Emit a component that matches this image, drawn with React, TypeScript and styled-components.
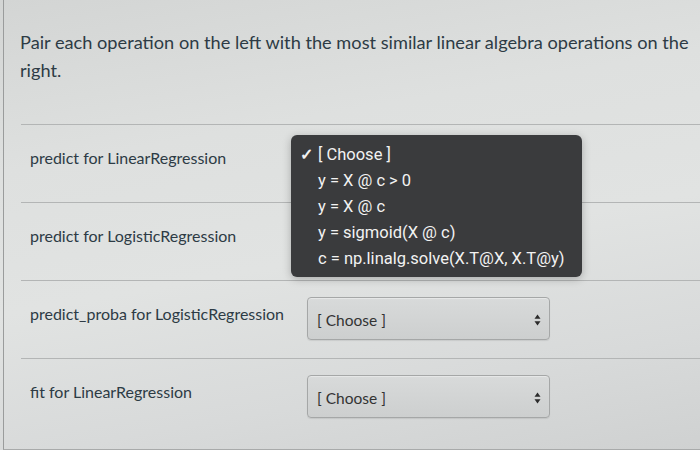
import React from "react";
import styled, { createGlobalStyle } from "styled-components";

const Global = createGlobalStyle`
  html, body { margin: 0; padding: 0; }
  body {
    width: 700px;
    height: 450px;
    overflow: hidden;
    background: linear-gradient(170deg, #d3d5d4 0%, #dee0df 30%, #e1e3e2 55%, #d8dada 80%, #cfd1d1 100%);
    font-family: Lato, "Open Sans", sans-serif;
  }
`;

const Frame = styled.div`
  position: relative;
  box-sizing: border-box;
  height: 450px;
  margin-left: 3px;
  border-left: 1px solid #9a9c9c;
  border-bottom: 1px solid #a8aaaa;
`;

const Question = styled.p`
  margin: 0;
  padding: 28px 0 0 16px;
  font-size: 18.2px;
  line-height: 28px;
  color: #2d3b45;
`;

const Answers = styled.div`
  margin: 40px 0 0 17px;
`;

const Row = styled.div`
  display: flex;
  align-items: flex-start;
  box-sizing: border-box;
  height: 78px;
  padding-top: 16px;
  border-top: 1px solid #b3b5b5;
`;

const Label = styled.div`
  width: 286px;
  box-sizing: border-box;
  padding: 6px 0 0 9px;
  font-size: 16px;
  line-height: 22px;
  color: #2d3b45;
`;

const SelectBox = styled.div<{ $hidden?: boolean }>`
  display: flex;
  align-items: center;
  justify-content: space-between;
  box-sizing: border-box;
  width: 243px;
  height: 43px;
  padding: 2px 8px 0 9px;
  border: 1px solid #a5a7a7;
  border-radius: 4px;
  background: linear-gradient(180deg, #d8dada 0%, #cdcfcf 100%);
  box-shadow: inset 0 1px 1px rgba(255, 255, 255, 0.4), 0 1px 1px rgba(0, 0, 0, 0.08);
  font-size: 15.5px;
  color: #333;
  visibility: ${(p) => (p.$hidden ? "hidden" : "visible")};
`;

const Arrows = styled.svg`
  width: 7px;
  height: 12px;
`;

const Popup = styled.div`
  position: absolute;
  left: 287px;
  top: 135px;
  width: 291px;
  height: 142px;
  box-sizing: border-box;
  padding-top: 7px;
  border-radius: 6px;
  background: #3a3b3d;
  box-shadow: 0 2px 8px rgba(0, 0, 0, 0.25);
  font-family: Roboto, "Open Sans", sans-serif;
  color: #f2f2f2;
`;

const Option = styled.div`
  position: relative;
  height: 26px;
  line-height: 26px;
  padding-left: 27px;
  font-size: 16.5px;
  white-space: nowrap;
`;

const Check = styled.span`
  position: absolute;
  left: 9px;
  top: 0;
  font-size: 16px;
  font-weight: 700;
`;

const ArrowIcon = () => (
  <Arrows viewBox="0 0 7 12">
    <path d="M3.5 0.5 L6.5 4.8 L0.5 4.8 Z" fill="#2b2b2b" />
    <path d="M3.5 11.5 L6.5 7.2 L0.5 7.2 Z" fill="#2b2b2b" />
  </Arrows>
);

const rows = [
  "predict for LinearRegression",
  "predict for LogisticRegression",
  "predict_proba for LogisticRegression",
  "fit for LinearRegression",
];

const options = [
  "y = X @ c > 0",
  "y = X @ c",
  "y = sigmoid(X @ c)",
  "c = np.linalg.solve(X.T@X, X.T@y)",
];

export default function App() {
  return (
    <>
      <Global />
      <Frame>
        <Question>
          Pair each operation on the left with the most similar linear algebra operations on the right.
        </Question>
        <Answers>
          {rows.map((r, i) => (
            <Row key={r}>
              <Label>{r}</Label>
              <SelectBox $hidden={i < 2}>
                <span>[ Choose ]</span>
                <ArrowIcon />
              </SelectBox>
            </Row>
          ))}
        </Answers>
        <Popup>
          <Option>
            <Check>✓</Check>[ Choose ]
          </Option>
          {options.map((o) => (
            <Option key={o}>{o}</Option>
          ))}
        </Popup>
      </Frame>
    </>
  );
}
